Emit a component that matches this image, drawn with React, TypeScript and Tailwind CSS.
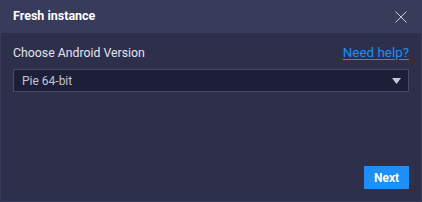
const App = () => {
  return (
    <div
      className="w-[422px] h-[202px] flex flex-col bg-[#2d2f4b] text-[#e4e5ee]"
      style={{ fontFamily: "Roboto, 'Liberation Sans', sans-serif" }}
    >
      <div className="h-[33px] shrink-0 flex items-center justify-between pl-[13px] pr-[15px] bg-[#383b59]">
        <span className="text-[12.5px] font-bold text-white">Fresh instance</span>
        <svg width="12" height="12" viewBox="0 0 12 12" className="text-[#c9cad8]">
          <path d="M0.5 0.5 L11.5 11.5 M11.5 0.5 L0.5 11.5" stroke="currentColor" strokeWidth="1" />
        </svg>
      </div>
      <div className="flex-1 flex flex-col px-[12px] pb-[12px] border-x border-b border-[#383b59]">
        <div className="flex items-center justify-between mt-[12px] h-[16px]">
          <span className="text-[12.3px]">Choose Android Version</span>
          <a href="#" className="text-[13.4px] text-[#1e8ff6] underline underline-offset-2">
            Need help?
          </a>
        </div>
        <div className="mt-[8px] h-[23px] flex items-center justify-between pl-[8px] pr-[7px] bg-[#1d1f38] border border-[#474a66]">
          <span className="text-[12px] text-[#c4c5d3]">Pie 64-bit</span>
          <svg width="9" height="6" viewBox="0 0 9 6" className="text-[#c8c9d8]">
            <path d="M0 0 H9 L4.5 6 Z" fill="currentColor" />
          </svg>
        </div>
        <div className="flex-1" />
        <div className="flex justify-end">
          <button
            type="button"
            className="w-[45px] h-[23px] bg-[#1e8ff6] text-white text-[12px] font-bold"
          >
            Next
          </button>
        </div>
      </div>
    </div>
  );
};

export default App;
